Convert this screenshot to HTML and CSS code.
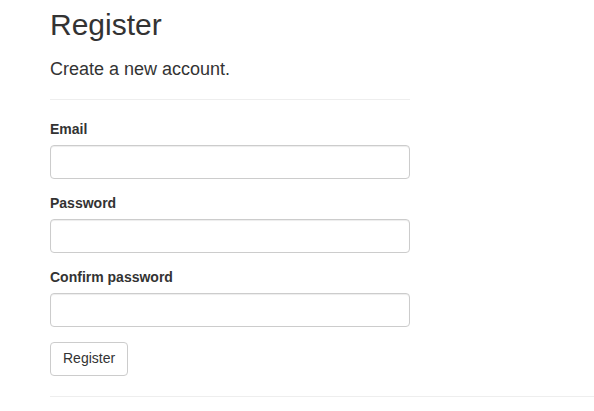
FILE: index.html
```html
<!DOCTYPE html>
<html lang="en">
<head>
<meta charset="utf-8">
<title>Register</title>
<link rel="stylesheet" href="styles.css">
</head>
<body>
<div class="container">
  <h2 class="title">Register</h2>
  <div class="column">
    <form class="form" action="#" method="post">
      <h4 class="subtitle">Create a new account.</h4>
      <hr class="rule">
      <div class="form-group">
        <label class="label" for="email">Email</label>
        <input class="form-control" id="email" type="email">
      </div>
      <div class="form-group">
        <label class="label" for="password">Password</label>
        <input class="form-control" id="password" type="password">
      </div>
      <div class="form-group">
        <label class="label" for="confirm">Confirm password</label>
        <input class="form-control" id="confirm" type="password">
      </div>
      <button class="btn" type="button">Register</button>
    </form>
  </div>
  <hr class="footer-rule">
</div>
</body>
</html>
```

FILE: styles.css
```css
html, body {
  margin: 0;
  padding: 0;
  background: #fff;
  overflow: hidden;
}
body {
  font-family: "Liberation Sans", Arial, Helvetica, sans-serif;
  font-size: 14px;
  line-height: 1.42857;
  color: #333;
}
.container {
  padding: 8px 0 0 50px;
}
.title {
  margin: 0 0 18px;
  font-size: 30px;
  font-weight: 500;
  line-height: 33px;
}
.column {
  width: 360px;
}
.form {
  margin: 0;
}
.subtitle {
  margin: 0 0 20px;
  font-size: 18px;
  font-weight: 500;
  line-height: 20px;
}
.rule, .footer-rule {
  margin: 0 0 20px;
  border: 0;
  border-top: 1px solid #eee;
  height: 0;
}
.footer-rule {
  margin: 20px 0 0;
}
.form-group {
  margin-bottom: 15px;
}
.label {
  display: block;
  margin-bottom: 5px;
  font-weight: 700;
}
.form-control {
  display: block;
  box-sizing: border-box;
  width: 100%;
  height: 34px;
  margin: 0;
  padding: 6px 12px;
  font: inherit;
  color: #555;
  background: #fff;
  border: 1px solid #ccc;
  border-radius: 4px;
  box-shadow: inset 0 1px 1px rgba(0, 0, 0, 0.075);
}
.btn {
  display: block;
  box-sizing: border-box;
  height: 34px;
  margin: 0;
  padding: 6px 12px;
  font: inherit;
  color: #333;
  background: #fff;
  border: 1px solid #ccc;
  border-radius: 4px;
}
```
